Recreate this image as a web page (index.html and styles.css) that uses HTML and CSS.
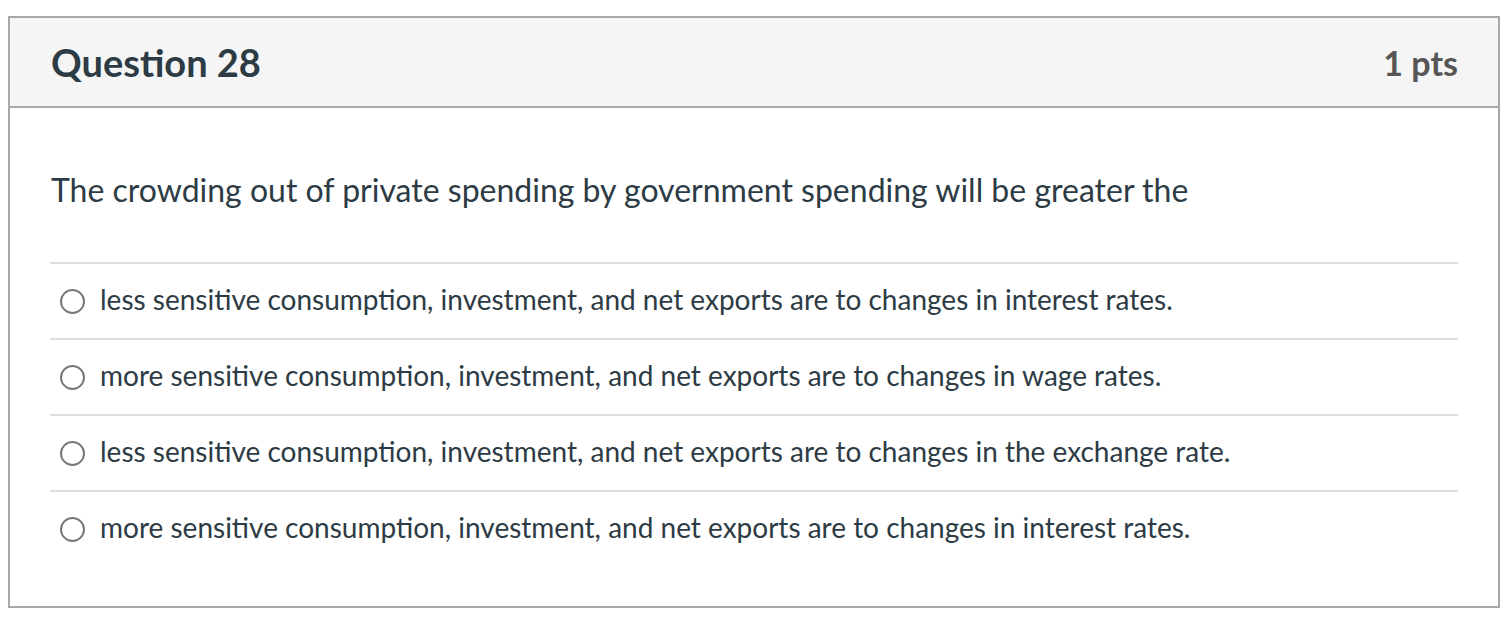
FILE: index.html
```html
<!DOCTYPE html>
<html>
<head>
<meta charset="utf-8">
<link rel="stylesheet" href="styles.css">
</head>
<body>
<div class="question">
  <div class="q-header">
    <h2 class="q-title">Question 28</h2>
    <div class="q-points">1 pts</div>
  </div>
  <div class="q-body">
    <p class="q-text">The crowding out of private spending by government spending will be greater the</p>
    <div class="answers">
      <label class="answer"><span class="radio"></span><span class="answer-text">less sensitive consumption, investment, and net exports are to changes in interest rates.</span></label>
      <label class="answer"><span class="radio"></span><span class="answer-text">more sensitive consumption, investment, and net exports are to changes in wage rates.</span></label>
      <label class="answer"><span class="radio"></span><span class="answer-text">less sensitive consumption, investment, and net exports are to changes in the exchange rate.</span></label>
      <label class="answer"><span class="radio"></span><span class="answer-text">more sensitive consumption, investment, and net exports are to changes in interest rates.</span></label>
    </div>
  </div>
</div>
</body>
</html>
```

FILE: styles.css
```css
* { box-sizing: border-box; }
body {
  margin: 16px 0 0 8px;
  font-family: Lato, "Liberation Sans", sans-serif;
  color: #2d3b45;
  background: #fff;
}
.question {
  width: 1492px;
  border: 2px solid #a8a8a8;
}
.q-header {
  height: 90px;
  background: #f5f5f5;
  border-bottom: 2px solid #a8a8a8;
  display: flex;
  align-items: center;
  justify-content: space-between;
  padding: 0 40px 0 41px;
}
.q-title {
  margin: 0;
  font-size: 38px;
  font-weight: 700;
  color: #2d3b45;
}
.q-points {
  font-size: 34px;
  font-weight: 700;
  color: #565656;
}
.q-body {
  padding: 61px 40px 40px 40px;
}
.q-text {
  margin: 0 0 51px 1px;
  font-size: 32px;
  line-height: 42px;
}
.answer {
  display: flex;
  align-items: center;
  height: 76px;
  border-top: 2px solid #dddddd;
  padding-left: 10px;
}
.radio {
  width: 25px;
  height: 25px;
  border: 2px solid #777;
  border-radius: 50%;
  flex: none;
  margin-right: 15px;
}
.answer-text {
  font-size: 28px;
  margin-bottom: 5px;
}
```
